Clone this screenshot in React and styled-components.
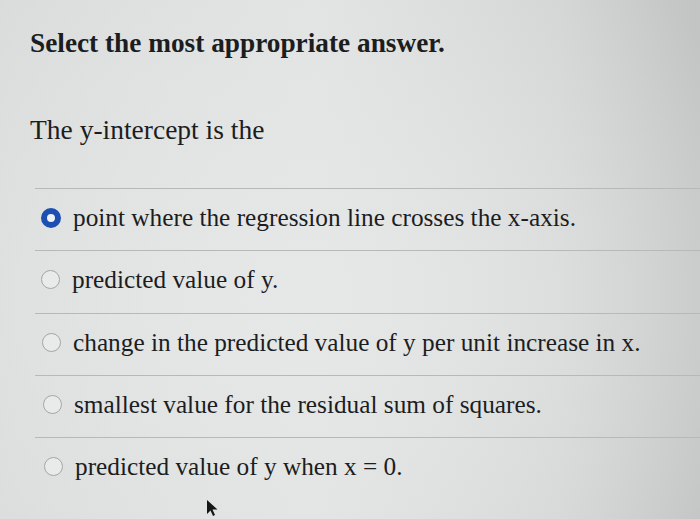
import React from 'react';
import styled, { createGlobalStyle } from 'styled-components';

const GlobalStyle = createGlobalStyle`
  html, body {
    margin: 0;
    padding: 0;
  }
  body {
    width: 700px;
    height: 519px;
    overflow: hidden;
    font-family: "Liberation Serif", "Times New Roman", serif;
    color: #1c1d1f;
    background:
      radial-gradient(ellipse 520px 420px at 300px 300px, #e6e8e7 0%, rgba(230, 232, 231, 0) 100%),
      linear-gradient(90deg, #d9dbda 0%, #e1e3e2 45%, #d2d4d3 80%, #c2c4c3 100%);
  }
`;

const Page = styled.div`
  position: relative;
  height: 519px;
  padding: 26px 0 0 30px;
  box-sizing: border-box;
`;

const Title = styled.h1`
  margin: 0;
  font-size: 27.3px;
  font-weight: 700;
  line-height: 34px;
`;

const Question = styled.p`
  margin: 53px 0 0;
  font-size: 27.5px;
  line-height: 34px;
`;

const Options = styled.div`
  margin: 41px 0 0 5px;
  display: flex;
  flex-direction: column;
`;

const Row = styled.label`
  display: flex;
  align-items: center;
  height: 62.3px;
  box-sizing: border-box;
  padding-bottom: 4px;
  border-top: 1px solid #b7b9b8;
  font-size: 25.3px;
  gap: 12px;
  padding-left: ${(p) => 6 + p.$indent}px;
`;

const Radio = styled.span`
  flex: none;
  width: 19px;
  height: 19px;
  border-radius: 50%;
  box-sizing: border-box;
  border: 1.5px solid #a4a6a6;
  background: #e9ebea;
`;

const Checked = styled(Radio)`
  width: 20px;
  height: 20px;
  border: 6.5px solid #1d4fb2;
  background: #eef1f6;
`;

const Cursor = styled.svg`
  position: absolute;
  left: 206px;
  top: 499px;
`;

const options = [
  { text: 'point where the regression line crosses the x-axis.', checked: true, indent: 0 },
  { text: 'predicted value of y.', indent: 0 },
  { text: 'change in the predicted value of y per unit increase in x.', indent: 1 },
  { text: 'smallest value for the residual sum of squares.', indent: 2 },
  { text: 'predicted value of y when x = 0.', indent: 3 },
];

export default function App() {
  return (
    <>
      <GlobalStyle />
      <Page>
        <Title>Select the most appropriate answer.</Title>
        <Question>The y-intercept is the</Question>
        <Options>
          {options.map((o) => (
            <Row key={o.text} $indent={o.indent}>
              {o.checked ? <Checked /> : <Radio />}
              <span>{o.text}</span>
            </Row>
          ))}
        </Options>
        <Cursor width="16" height="20" viewBox="0 0 16 20">
          <path d="M1 1 L1 15 L4.5 11.5 L7 17 L9 16 L6.5 10.5 L11.5 10.5 Z" fill="#151617" />
        </Cursor>
      </Page>
    </>
  );
}
